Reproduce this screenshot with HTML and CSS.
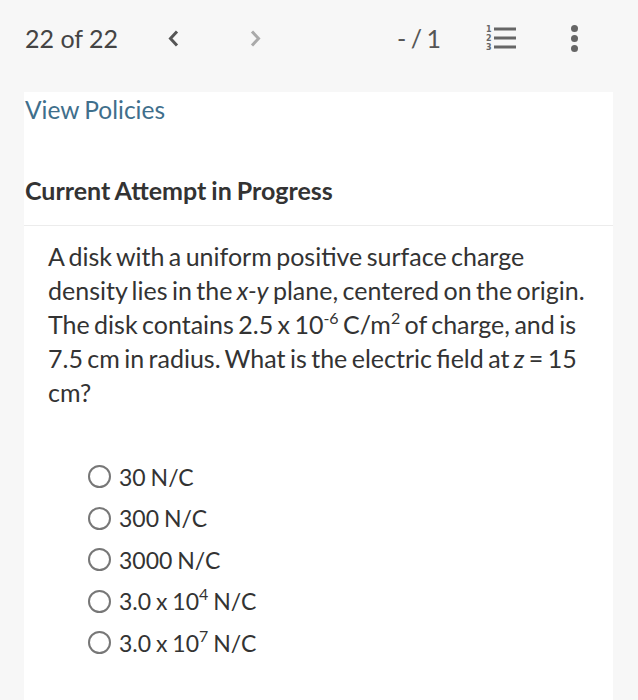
FILE: index.html
```html
<!DOCTYPE html>
<html>
<head>
<meta charset="utf-8">
<link rel="stylesheet" href="styles.css">
</head>
<body>
<div class="topbar">
  <span class="count">22 of 22</span>
  <span class="nav prev"><svg width="13" height="17" viewBox="0 0 13 17"><path d="M10 1.5 L3.5 8.5 L10 15.5" fill="none" stroke="#555" stroke-width="3"/></svg></span>
  <span class="nav next"><svg width="13" height="17" viewBox="0 0 13 17"><path d="M3 1.5 L9.5 8.5 L3 15.5" fill="none" stroke="#aaa" stroke-width="3"/></svg></span>
  <span class="pages">- / 1</span>
  <span class="listicon"><svg width="32" height="26" viewBox="0 0 32 26">
    <text x="0" y="7" class="num">1</text>
    <text x="0" y="16" class="num">2</text>
    <text x="0" y="25" class="num">3</text>
    <rect x="8" y="2.5" width="22" height="3" fill="#666"/>
    <rect x="8" y="11.5" width="22" height="3" fill="#666"/>
    <rect x="8" y="20.5" width="22" height="3" fill="#666"/>
  </svg></span>
  <span class="kebab"><i></i><i></i><i></i></span>
</div>
<div class="card">
  <a class="policies">View Policies</a>
  <h2 class="title">Current Attempt in Progress</h2>
  <p class="question">A disk with a uniform positive surface charge density lies in the <i>x-y</i> plane, centered on the origin. The disk contains 2.5 x 10<sup>-6</sup> C/m<sup>2</sup> of charge, and is 7.5 cm in radius. What is the electric field at <i>z</i> = 15 cm?</p>
  <ul class="options">
    <li><span class="radio"></span><span class="label">30 N/C</span></li>
    <li><span class="radio"></span><span class="label">300 N/C</span></li>
    <li><span class="radio"></span><span class="label">3000 N/C</span></li>
    <li><span class="radio"></span><span class="label">3.0 x 10<sup>4</sup> N/C</span></li>
    <li><span class="radio"></span><span class="label">3.0 x 10<sup>7</sup> N/C</span></li>
  </ul>
</div>
</body>
</html>
```
FILE: styles.css
```css
html, body {
  margin: 0;
  padding: 0;
  background: #f7f7f7;
  font-family: Lato, "Open Sans", sans-serif;
  color: #333;
}
.topbar {
  height: 92px;
  background: #f7f7f7;
  display: flex;
  align-items: center;
  padding: 0 0 16px 25px;
  box-sizing: border-box;
  color: #444;
}
.count {
  font-size: 25px;
  width: 142px;
}
.nav {
  display: flex;
  width: 82px;
}
.nav.next {
  width: 148px;
}
.pages {
  font-size: 25px;
  color: #555;
  width: 89px;
  word-spacing: -2px;
}
.listicon {
  display: flex;
  width: 85px;
}
.num {
  font-family: "DejaVu Sans", sans-serif;
  font-size: 8px;
  font-weight: bold;
  fill: #666;
}
.kebab {
  display: flex;
  flex-direction: column;
  gap: 3px;
}
.kebab i {
  display: block;
  width: 7px;
  height: 7px;
  border-radius: 50%;
  background: #666;
}
.card {
  background: #fff;
  margin-left: 24px;
  width: 589px;
  min-height: 608px;
  padding-top: 4px;
  box-sizing: border-box;
}
.policies {
  display: block;
  font-size: 24.5px;
  color: #3f6f8c;
  padding-left: 1px;
  line-height: 28px;
  word-spacing: -1px;
}
.title {
  margin: 52px 0 0;
  font-size: 25px;
  font-weight: bold;
  line-height: 28px;
  padding: 0 0 21px 1px;
  border-bottom: 1px solid #ececec;
  color: #333;
  word-spacing: -1px;
}
.question {
  margin: 13px 0 0;
  padding: 0 20px 0 24px;
  font-size: 25px;
  line-height: 34px;
  word-spacing: -2px;
}
.question sup, .options sup {
  font-size: 16px;
  line-height: 0;
  vertical-align: 10px;
}
.options {
  list-style: none;
  margin: 47px 0 0;
  padding: 0 0 0 64px;
}
.options li {
  display: flex;
  align-items: center;
  font-size: 23px;
  height: 41.5px;
  word-spacing: -1px;
}
.radio {
  display: block;
  width: 19px;
  height: 19px;
  border: 2px solid #777;
  border-radius: 50%;
  margin-right: 8px;
  flex: none;
}
```
